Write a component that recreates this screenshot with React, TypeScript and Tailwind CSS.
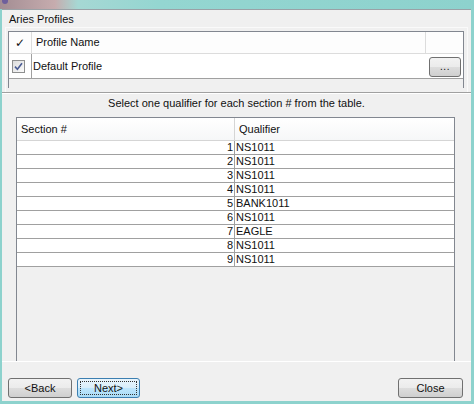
import { FC } from 'react';

type Row = { section: number; qualifier: string };

const rows: Row[] = [
  { section: 1, qualifier: 'NS1011' },
  { section: 2, qualifier: 'NS1011' },
  { section: 3, qualifier: 'NS1011' },
  { section: 4, qualifier: 'NS1011' },
  { section: 5, qualifier: 'BANK1011' },
  { section: 6, qualifier: 'NS1011' },
  { section: 7, qualifier: 'EAGLE' },
  { section: 8, qualifier: 'NS1011' },
  { section: 9, qualifier: 'NS1011' },
];

const CheckBox: FC = () => (
  <div className="w-[13px] h-[13px] border border-[#8e8f8f] bg-[linear-gradient(135deg,#dcdcdc,#fbfbfb)] flex items-center justify-center">
    <svg width="9" height="9" viewBox="0 0 9 9">
      <path d="M1 4.6 L3.4 7.2 L8 1.2" fill="none" stroke="#4a5c94" strokeWidth="1.6" />
    </svg>
  </div>
);

const Button: FC<{ label: string; width: string; focused?: boolean }> = ({ label, width, focused }) => (
  <button
    className={
      focused
        ? `${width} h-[20px] rounded-[3px] border border-[#3c7fb1] bg-[linear-gradient(#eaf5fc_0%,#d9eefa_50%,#bee6fd_51%,#a9dbf6_100%)] p-[2px] text-[11px] text-[#111]`
        : `${width} h-[20px] rounded-[3px] border border-[#707070] bg-[linear-gradient(#f2f2f2_0%,#ebebeb_50%,#dddddd_51%,#cfcfcf_100%)] text-[11px] text-[#111]`
    }
  >
    {focused ? (
      <span className="flex h-full w-full items-center justify-center border border-dotted border-[#333]">{label}</span>
    ) : (
      label
    )}
  </button>
);

export default function App() {
  return (
    <div className="w-[474px] h-[404px] bg-[#8dd2cd] flex flex-col overflow-hidden font-['Liberation_Sans',Arial,sans-serif] text-[11px] text-[#111]">
      <div className="h-[9px] shrink-0 bg-[linear-gradient(to_right,#a38d93_0px,#c6acae_55px,#a6d8d4_78px,#94d6d1_160px,#8dd2cd_100%)]">
        <div className="ml-[2px] w-[6px] h-[4px] rounded-b-full bg-[#6e5f9c]" />
      </div>

      <div className="ml-[2px] mr-[3px] mb-[3px] flex-1 flex flex-col bg-[#f0f0f0] border-t border-[#9aa1a6]">
        {/* Aries Profiles */}
        <div className="h-[82px] shrink-0 flex flex-col">
          <div className="h-[17px] pl-[7px] pt-[3px] leading-[13px]">Aries Profiles</div>
          <div className="mx-[3px] flex-1 border-t border-x border-[#fafafa] pt-[3px] px-[2px]">
            <div className="h-[57px] mr-[1px] border-t border-x border-[#828790] flex flex-col">
              <div className="h-[22px] flex bg-[#fdfdfd] border-b border-[#dcdcdc]">
                <div className="w-[23px] border-r border-[#dcdcdc] flex items-center pl-[6px]">
                  <span className="font-['DejaVu_Sans',sans-serif] text-[12px] font-bold">✓</span>
                </div>
                <div className="flex-1 border-r border-[#dcdcdc] flex items-center pl-[4px]">Profile Name</div>
                <div className="w-[37px]" />
              </div>
              <div className="h-[25px] flex bg-white border-b border-[#a0a0a0]">
                <div className="w-[23px] border-r border-[#a0a0a0] flex items-center pl-[3px]">
                  <CheckBox />
                </div>
                <div className="flex-1 flex items-center pl-[1px]">Default Profile</div>
                <div className="w-[37px] pl-[3px] pt-[3px]">
                  <button className="w-[32px] h-[20px] rounded-[3px] border border-[#707070] bg-[linear-gradient(#f2f2f2_0%,#ebebeb_50%,#dddddd_51%,#cfcfcf_100%)] text-[10px] leading-[10px] tracking-[0.5px]">
                    ...
                  </button>
                </div>
              </div>
            </div>
          </div>
        </div>

        <div className="h-[2px] shrink-0 border-t border-[#a0a0a0] bg-white" />

        {/* qualifiers */}
        <div className="h-[268px] shrink-0 flex flex-col border-b border-white">
          <div className="pt-[3px] h-[23px] leading-[13px] text-center">
            Select one qualifier for each section # from the table.
          </div>
          <div className="ml-[14px] mr-[16px] flex-1 border-t border-x border-[#828790] flex flex-col">
            <div className="h-[23px] shrink-0 flex bg-[linear-gradient(#ffffff,#f6f7f8)] border-b border-[#d5d5d5]">
              <div className="w-[218px] border-r border-[#d5d5d5] flex items-center pl-[4px]">Section #</div>
              <div className="flex-1 flex items-center pl-[4px]">Qualifier</div>
            </div>
            {rows.map((r) => (
              <div key={r.section} className="h-[14px] shrink-0 flex bg-white border-b border-[#a0a0a0] leading-[13px]">
                <div className="w-[218px] border-r border-[#a0a0a0] text-right pr-[1px]">{r.section}</div>
                <div className="flex-1 pl-[1px]">{r.qualifier}</div>
              </div>
            ))}
          </div>
        </div>

        <div className="flex-1 flex items-start pt-[16px] pl-[6px] pr-[8px]">
          <div className="flex gap-[5px]">
            <Button label="<Back" width="w-[64px]" />
            <Button label="Next>" width="w-[63px]" focused />
          </div>
          <div className="ml-auto">
            <Button label="Close" width="w-[65px]" />
          </div>
        </div>
      </div>
    </div>
  );
}
